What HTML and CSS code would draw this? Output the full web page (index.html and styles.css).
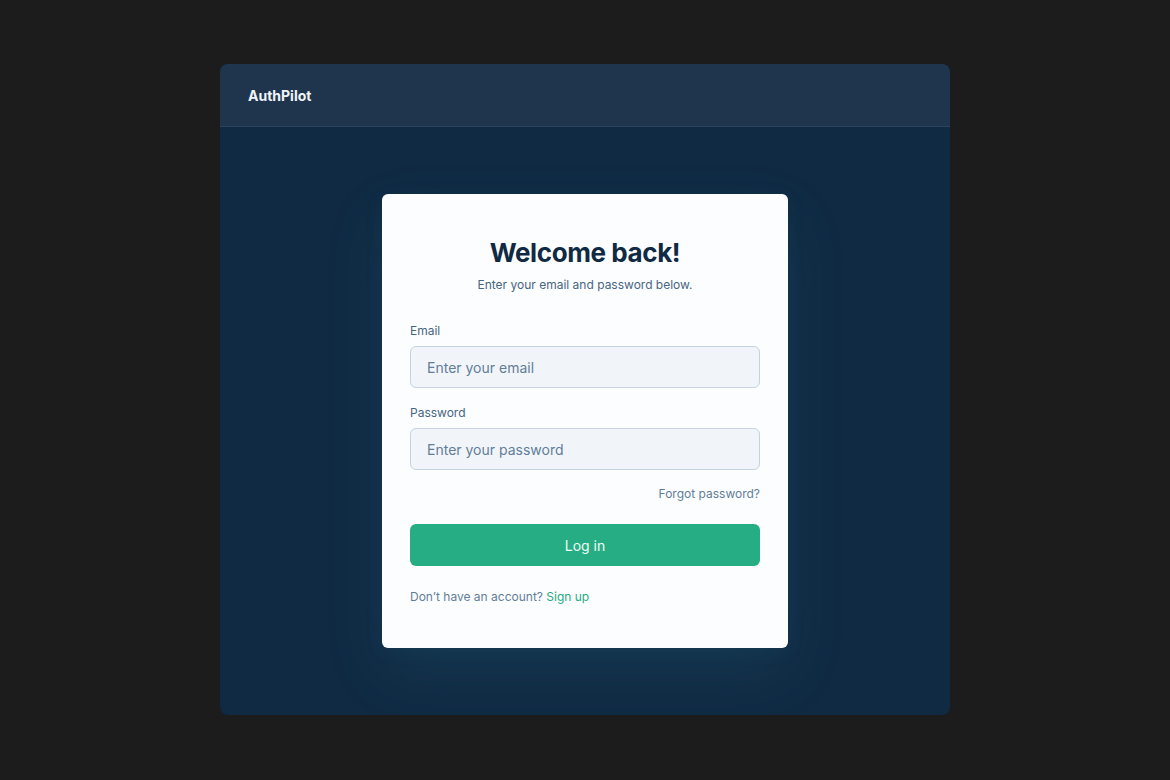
FILE: index.html
```html
<!DOCTYPE html>
<html lang="en">
<head>
<meta charset="utf-8">
<title>AuthPilot</title>
<link rel="stylesheet" href="styles.css">
</head>
<body>
<div class="window">
  <header class="topbar">
    <span class="brand">AuthPilot</span>
  </header>
  <main class="stage">
    <div class="card">
      <h1 class="title">Welcome back!</h1>
      <p class="subtitle">Enter your email and password below.</p>
      <form class="form">
        <label class="label" for="email">Email</label>
        <input class="input" id="email" type="email" placeholder="Enter your email">
        <label class="label label-second" for="password">Password</label>
        <input class="input" id="password" type="password" placeholder="Enter your password">
        <div class="forgot-row"><a class="forgot" href="#">Forgot password?</a></div>
        <button class="button" type="button">Log in</button>
      </form>
      <p class="signup">Don’t have an account? <a class="signup-link" href="#">Sign up</a></p>
    </div>
  </main>
</div>
</body>
</html>
```
FILE: styles.css
```css
* { box-sizing: border-box; }
html, body { margin: 0; padding: 0; }
body {
  background: #1c1c1d;
  font-family: Inter, "Noto Sans", "Liberation Sans", sans-serif;
  width: 1170px;
  height: 780px;
  display: flex;
  justify-content: center;
  padding-top: 64px;
}
.window {
  width: 730px;
  height: 651px;
  border-radius: 8px;
  overflow: hidden;
  background: #102a43;
  display: flex;
  flex-direction: column;
}
.topbar {
  height: 63px;
  flex: none;
  background: #1f354d;
  border-bottom: 1px solid #2c445e;
  display: flex;
  align-items: center;
  padding: 0 28px;
}
.brand {
  color: #f0f4f8;
  font-size: 14px;
  font-weight: 700;
}
.stage {
  flex: 1;
  display: flex;
  justify-content: center;
  padding-top: 67px;
}
.card {
  width: 406px;
  height: 454px;
  background: #fcfdfe;
  border-radius: 6px;
  padding: 42px 28px 41px;
  box-shadow: 0 24px 60px rgba(60, 150, 170, 0.13), 0 4px 20px rgba(40, 110, 140, 0.08);
}
.title {
  margin: 0;
  text-align: center;
  font-size: 26px;
  line-height: 34px;
  font-weight: 700;
  color: #102a43;
  letter-spacing: -0.4px;
}
.subtitle {
  margin: 5px 0 0;
  text-align: center;
  font-size: 12px;
  line-height: 20px;
  color: #486581;
}
.form {
  display: flex;
  flex-direction: column;
  margin-top: 26px;
}
.label {
  font-size: 12px;
  line-height: 20px;
  color: #486581;
  margin-bottom: 5px;
}
.label-second { margin-top: 15px; }
.input {
  height: 42px;
  flex: none;
  width: 100%;
  border: 1px solid #c3d3e3;
  border-radius: 6px;
  background: #f1f5f9;
  padding: 0 16px;
  font-family: inherit;
  font-size: 14px;
  color: #102a43;
  outline: none;
}
.input::placeholder { color: #627d98; }
.forgot-row {
  display: flex;
  justify-content: flex-end;
  margin-top: 14px;
  line-height: 20px;
}
.forgot {
  font-size: 12px;
  color: #627d98;
  text-decoration: none;
}
.button {
  margin-top: 20px;
  height: 42px;
  flex: none;
  width: 100%;
  border: none;
  border-radius: 6px;
  background: #27ad83;
  color: #f0fbf7;
  font-family: inherit;
  font-size: 14px;
  font-weight: 400;
}
.signup {
  margin: 21px 0 0;
  font-size: 12px;
  line-height: 20px;
  color: #627d98;
}
.signup-link {
  color: #27ab83;
  text-decoration: none;
}
```
